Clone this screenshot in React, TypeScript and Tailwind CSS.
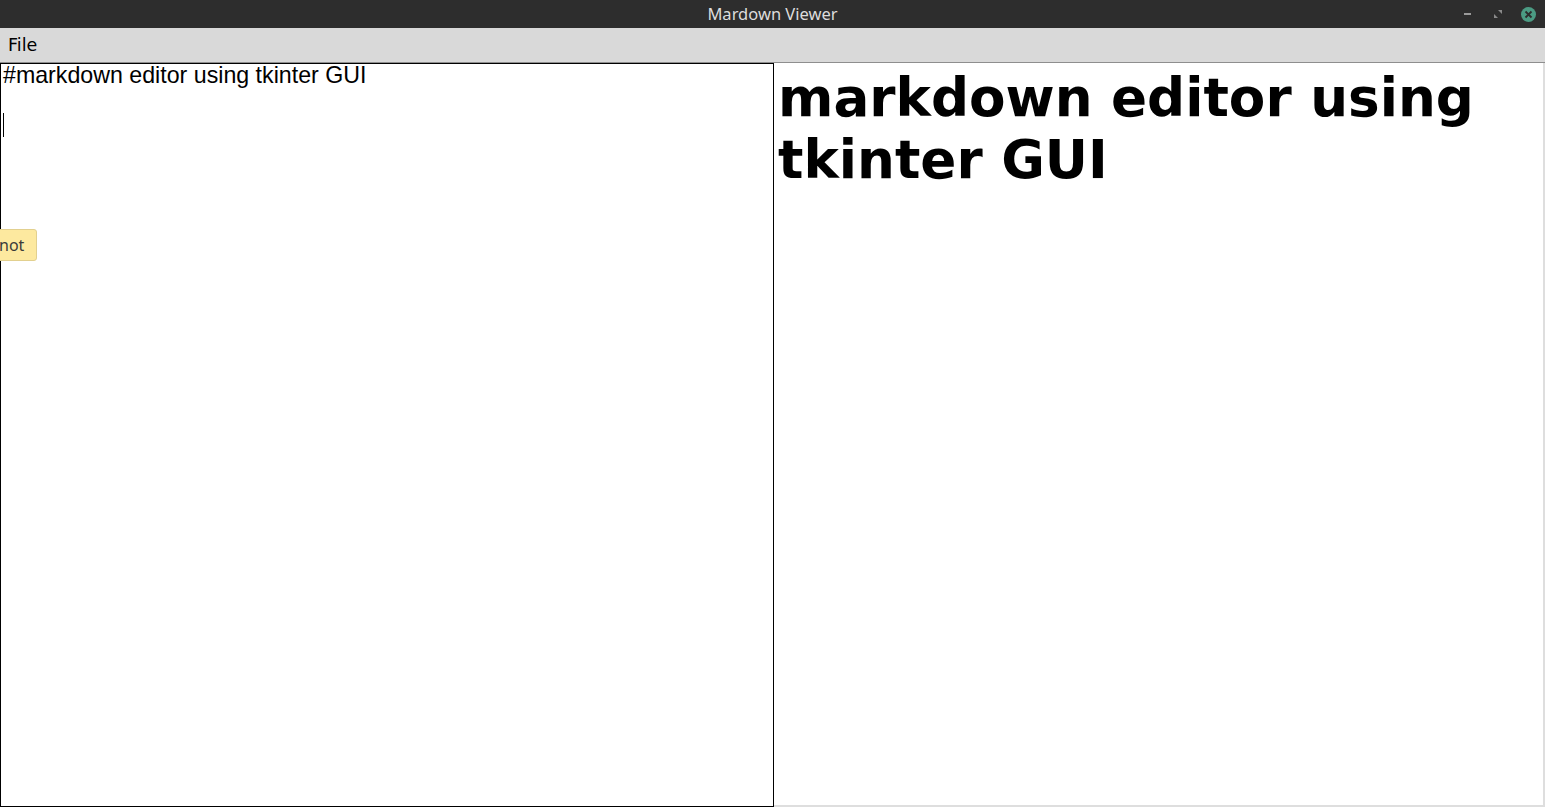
export default function App() {
  return (
    <div className="w-[1545px] h-[807px] flex flex-col bg-white overflow-hidden relative">
      {/* title bar */}
      <div className="h-[28px] bg-[#2d2d2d] flex items-center justify-center relative shrink-0">
        <span className="text-[16.5px] text-[#dcdcdc] font-['Noto_Sans',sans-serif] leading-none">Mardown Viewer</span>
        <div className="absolute right-[9px] top-0 h-[28px] flex items-center gap-[17px]">
          <div className="w-[7px] h-[2px] bg-[#9a9a9a]" />
          <svg width="12" height="12" viewBox="0 0 12 12" className="ml-[4px]">
            <path d="M6 2h4v4z" fill="#8a8a8a" />
            <path d="M2 6v4h4z" fill="#8a8a8a" />
          </svg>
          <div className="w-[15px] h-[15px] rounded-full bg-[#4b9b83] flex items-center justify-center">
            <svg width="9" height="9" viewBox="0 0 9 9">
              <path d="M1.5 1.5l6 6M7.5 1.5l-6 6" stroke="#2d2d2d" strokeWidth="1.8" />
            </svg>
          </div>
        </div>
      </div>
      {/* menu bar */}
      <div className="h-[35px] bg-[#d9d9d9] border-b border-[#8e8e8e] flex items-center px-[8px] pt-[1px] shrink-0">
        <span className="text-[17.5px] text-black font-['DejaVu_Sans',sans-serif]">File</span>
      </div>
      {/* panes */}
      <div className="flex flex-1 min-h-0">
        <div className="w-[774px] border border-black relative">
          <div className="pl-[2px] text-[23.2px] leading-[22px] text-black font-['Liberation_Sans',Arial,sans-serif]">
            #markdown editor using tkinter GUI
          </div>
          <div className="ml-[2px] mt-[27px] w-[1px] h-[24px] bg-black" />
          <div className="absolute left-[-13px] top-[165px] h-[32px] pl-[10px] pr-[12px] flex items-center bg-[#fde99f] border border-[#e2d08f] rounded-[3px] text-[16px] text-[#3a3a3a] font-['Noto_Sans',sans-serif]">
            not
          </div>
        </div>
        <div className="flex-1 border-r-[2px] border-b-[2px] border-[#dedede] pl-[4px] pt-[4px]">
          <h1 className="text-[53.2px] leading-[62px] font-bold text-black font-['DejaVu_Sans',sans-serif]">
            markdown editor using tkinter GUI
          </h1>
        </div>
      </div>
    </div>
  );
}
